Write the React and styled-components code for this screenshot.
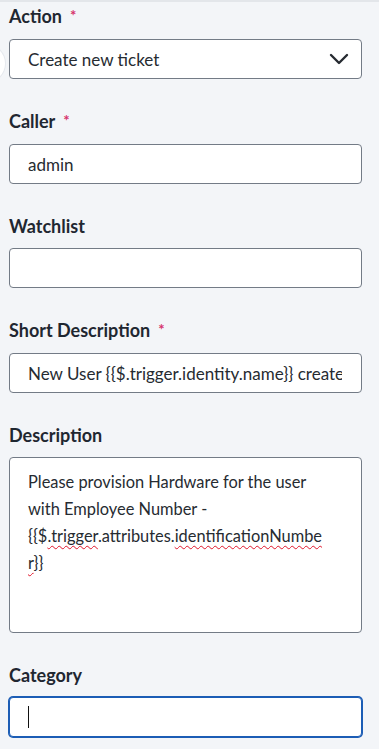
import React from 'react';
import styled, {createGlobalStyle} from 'styled-components';

const GlobalStyle = createGlobalStyle`
    html, body {
        margin: 0;
        padding: 0;
        background: #f3f5f8;
    }
    body {
        font-family: Lato, "Noto Sans", "Liberation Sans", sans-serif;
        color: #262b31;
    }
`;

const Page = styled.div`
    position: relative;
    min-height: 749px;
    border-top: 2px solid #e3e6ea;
    padding: 4px 17px 0 9px;
    box-sizing: border-box;
    display: flex;
    flex-direction: column;
    gap: 32px;
`;

// white edge of something behind the panel on the left
const EdgeTab = styled.div`
    position: absolute;
    left: -31px;
    top: 43px;
    width: 36px;
    height: 37px;
    border-radius: 50%;
    background: #fff;
    box-shadow: 0 0 0 1px #e6e9ee;
`;

const Field = styled.div`
    display: flex;
    flex-direction: column;
    gap: 12px;
`;

const Label = styled.label`
    font-size: 18px;
    line-height: 20px;
    font-weight: 700;
    color: #1f2731;
`;

const Required = styled.span`
    color: #d6336c;
    font-size: 15px;
    font-weight: 700;
    margin-left: 8px;
    position: relative;
    top: -2px;
`;

const Box = styled.div`
    position: relative;
    box-sizing: border-box;
    height: 40px;
    background: #fff;
    border: 1px solid ${p => (p.$focused ? '#1c5db5' : '#737b86')};
    box-shadow: ${p => (p.$focused ? '0 0 0 1px #1c5db5' : 'none')};
    border-radius: 4px;
    padding: 0 19px 0 18px;
    display: flex;
    align-items: center;
    font-size: 17px;
    color: #262b31;
    overflow: hidden;
`;

const Input = styled.input`
    box-sizing: border-box;
    width: 100%;
    height: 40px;
    background: #fff;
    border: 1px solid #737b86;
    border-radius: 4px;
    padding: 0 19px 0 18px;
    font-family: inherit;
    font-size: 17px;
    color: #262b31;
    outline: none;
`;

const Chevron = styled.svg`
    position: absolute;
    right: 12px;
    top: 13px;
`;

const TextArea = styled.div`
    box-sizing: border-box;
    height: 176px;
    background: #fff;
    border: 1px solid #737b86;
    border-radius: 4px;
    padding: 10px 19px 0 18px;
    font-size: 16.4px;
    line-height: 27px;
    color: #262b31;
`;

const Line = styled.div`
    white-space: nowrap;
`;

const Misspelled = styled.span`
    text-decoration: underline wavy #e0162b;
    text-decoration-thickness: 1px;
    text-underline-offset: 3px;
`;

const Caret = styled.span`
    display: block;
    width: 1px;
    height: 22px;
    background: #111;
`;

export default function App() {
    return (
        <>
            <GlobalStyle />
            <Page>
                <EdgeTab />
                <Field>
                    <Label>Action<Required>*</Required></Label>
                    <Box>
                        Create new ticket
                        <Chevron width="20" height="12" viewBox="0 0 20 12">
                            <path d="M2 2 L10 10 L18 2" fill="none" stroke="#262b31" strokeWidth="2.4" strokeLinecap="round" strokeLinejoin="round" />
                        </Chevron>
                    </Box>
                </Field>
                <Field>
                    <Label>Caller<Required>*</Required></Label>
                    <Input defaultValue="admin" />
                </Field>
                <Field>
                    <Label>Watchlist</Label>
                    <Input defaultValue="" />
                </Field>
                <Field>
                    <Label>Short Description<Required>*</Required></Label>
                    <Input defaultValue="New User {{$.trigger.identity.name}} created" />
                </Field>
                <Field>
                    <Label>Description</Label>
                    <TextArea>
                        <Line>Please provision Hardware for the user</Line>
                        <Line>with Employee Number -</Line>
                        <Line>{'{{$'}<Misspelled>.trigger</Misspelled>.attributes.<Misspelled>identificationNumbe</Misspelled></Line>
                        <Line><Misspelled>r</Misspelled>{'}}'}</Line>
                    </TextArea>
                </Field>
                <Field>
                    <Label>Category</Label>
                    <Box $focused>
                        <Caret />
                    </Box>
                </Field>
            </Page>
        </>
    );
}
